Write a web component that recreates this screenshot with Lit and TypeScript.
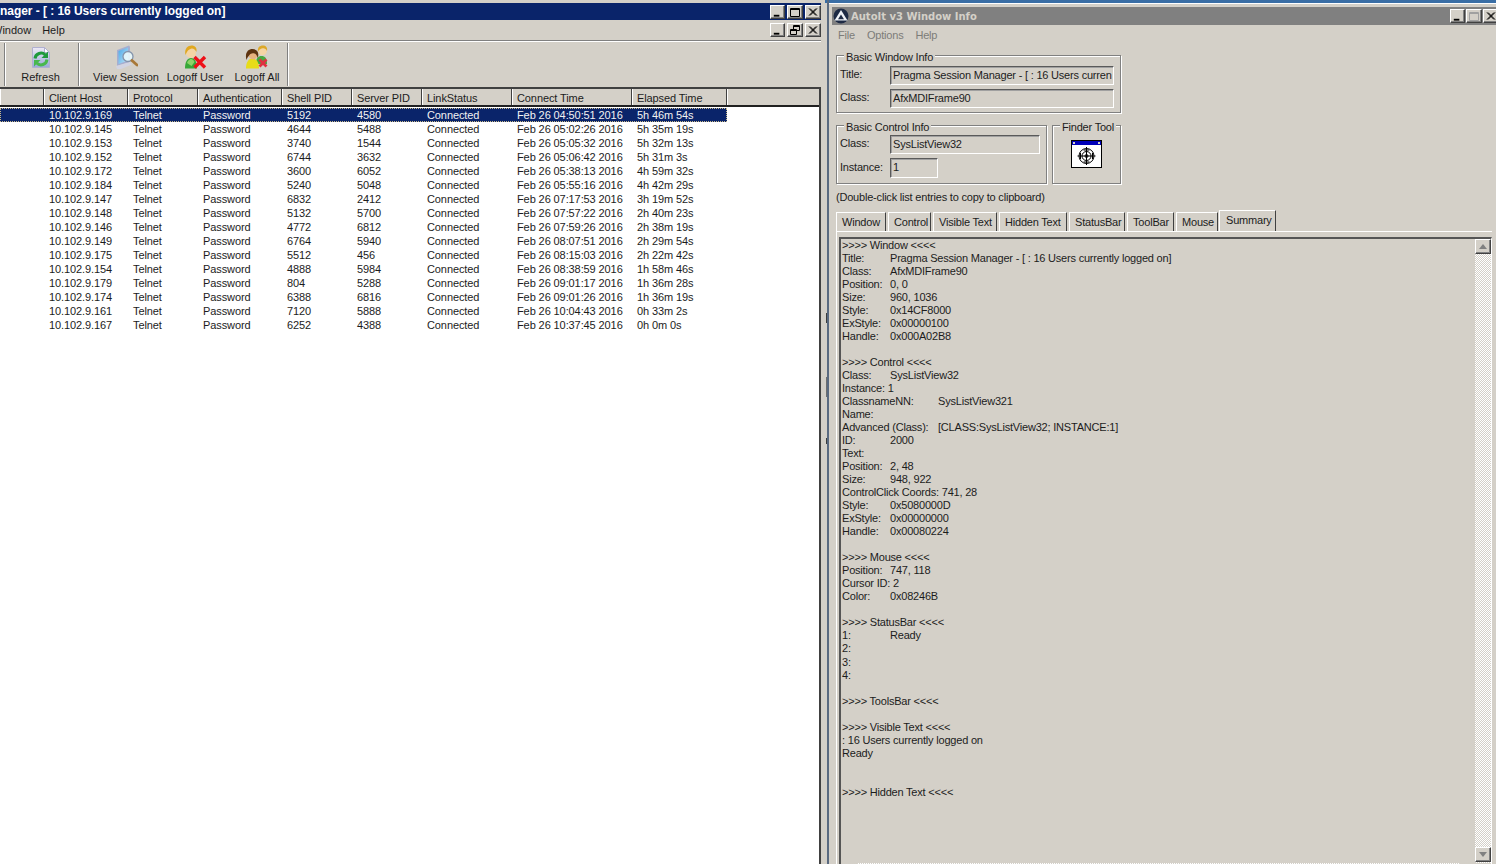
import { LitElement, html, css, svg } from "lit";
import { customElement } from "lit/decorators.js";

const COLS = [44, 84, 70, 84, 70, 70, 90, 120, 95];
const HEAD = ["", "Client Host", "Protocol", "Authentication", "Shell PID", "Server PID", "LinkStatus", "Connect Time", "Elapsed Time"];
const ROWS = [
  ["10.102.9.169", "5192", "4580", "Feb 26 04:50:51 2016", "5h 46m 54s"],
  ["10.102.9.145", "4644", "5488", "Feb 26 05:02:26 2016", "5h 35m 19s"],
  ["10.102.9.153", "3740", "1544", "Feb 26 05:05:32 2016", "5h 32m 13s"],
  ["10.102.9.152", "6744", "3632", "Feb 26 05:06:42 2016", "5h 31m 3s"],
  ["10.102.9.172", "3600", "6052", "Feb 26 05:38:13 2016", "4h 59m 32s"],
  ["10.102.9.184", "5240", "5048", "Feb 26 05:55:16 2016", "4h 42m 29s"],
  ["10.102.9.147", "6832", "2412", "Feb 26 07:17:53 2016", "3h 19m 52s"],
  ["10.102.9.148", "5132", "5700", "Feb 26 07:57:22 2016", "2h 40m 23s"],
  ["10.102.9.146", "4772", "6812", "Feb 26 07:59:26 2016", "2h 38m 19s"],
  ["10.102.9.149", "6764", "5940", "Feb 26 08:07:51 2016", "2h 29m 54s"],
  ["10.102.9.175", "5512", "456", "Feb 26 08:15:03 2016", "2h 22m 42s"],
  ["10.102.9.154", "4888", "5984", "Feb 26 08:38:59 2016", "1h 58m 46s"],
  ["10.102.9.179", "804", "5288", "Feb 26 09:01:17 2016", "1h 36m 28s"],
  ["10.102.9.174", "6388", "6816", "Feb 26 09:01:26 2016", "1h 36m 19s"],
  ["10.102.9.161", "7120", "5888", "Feb 26 10:04:43 2016", "0h 33m 2s"],
  ["10.102.9.167", "6252", "4388", "Feb 26 10:37:45 2016", "0h 0m 0s"],
];
const TABS: [string, number][] = [
  ["Window", 50], ["Control", 43], ["Visible Text", 64], ["Hidden Text", 68],
  ["StatusBar", 56], ["ToolBar", 47], ["Mouse", 42],
];

// [label, value, tab width]
const SUMMARY: ([string] | [string, string] | [string, string, number])[] = [
  [">>>> Window <<<<"],
  ["Title:", "Pragma Session Manager - [ : 16 Users currently logged on]"],
  ["Class:", "AfxMDIFrame90"],
  ["Position:", "0, 0"],
  ["Size:", "960, 1036"],
  ["Style:", "0x14CF8000"],
  ["ExStyle:", "0x00000100"],
  ["Handle:", "0x000A02B8"],
  [""],
  [">>>> Control <<<<"],
  ["Class:", "SysListView32"],
  ["Instance: 1"],
  ["ClassnameNN:", "SysListView321", 96],
  ["Name:"],
  ["Advanced (Class):", "[CLASS:SysListView32; INSTANCE:1]", 96],
  ["ID:", "2000"],
  ["Text:"],
  ["Position:", "2, 48"],
  ["Size:", "948, 922"],
  ["ControlClick Coords: 741, 28"],
  ["Style:", "0x5080000D"],
  ["ExStyle:", "0x00000000"],
  ["Handle:", "0x00080224"],
  [""],
  [">>>> Mouse <<<<"],
  ["Position:", "747, 118"],
  ["Cursor ID: 2"],
  ["Color:", "0x08246B"],
  [""],
  [">>>> StatusBar <<<<"],
  ["1:", "Ready"],
  ["2:"],
  ["3:"],
  ["4:"],
  [""],
  [">>>> ToolsBar <<<<"],
  [""],
  [">>>> Visible Text <<<<"],
  [": 16 Users currently logged on"],
  ["Ready"],
  [""],
  [""],
  [">>>> Hidden Text <<<<"],
];

const refreshIcon = svg`<svg width="24" height="24" viewBox="0 0 24 24">
  <defs><linearGradient id="rp" x1="0" y1="0" x2="0" y2="1"><stop offset="0" stop-color="#eeeaf6"/><stop offset="1" stop-color="#98a8d8"/></linearGradient></defs>
  <path d="M3.500 2.500h12l5 5v15h-17z" fill="url(#rp)" stroke="#b0b0d0"/>
  <path d="M15.500 2.500v5h5z" fill="#fff" stroke="#b0b0d0"/>
  <path d="M6 13.500a6 6 0 0 1 10.300-3.500" fill="none" stroke="#1f9a3c" stroke-width="3"/>
  <path d="M19 6.500v6.500h-6.500z" fill="#1f9a3c"/>
  <path d="M18 14.500a6 6 0 0 1-10.300 3.500" fill="none" stroke="#48b84e" stroke-width="3"/>
  <path d="M5 21.500v-6.500h6.500z" fill="#48b84e"/>
</svg>`;
const viewIcon = svg`<svg width="24" height="24" viewBox="0 0 24 24">
  <defs><linearGradient id="vm" x1="0" y1="0" x2="1" y2="1"><stop offset="0" stop-color="#4aa8e8"/><stop offset="1" stop-color="#c2e6f8"/></linearGradient></defs>
  <path d="M3 5l12-4.500 1 1v15.500L3 21z" fill="#a6aed0"/>
  <path d="M4.500 6l9.500-3.600v13L4.500 19z" fill="url(#vm)"/>
  <path d="M2 21l14-4 2 2.500-11 4.500H3z" fill="#d2d4e2"/>
  <circle cx="14" cy="11.500" r="5" fill="#e8f8fc" fill-opacity=".9" stroke="#8494ac" stroke-width="1.300"/>
  <path d="M18 15.500l5 4.500" stroke="#a87838" stroke-width="2.800" stroke-linecap="round"/>
</svg>`;
const xMark = (x: number, y: number, s: number, w: number, c = "#ee1018") => svg`<path d="M${x} ${y}l${s} ${s}m0-${s}l-${s} ${s}" stroke="${c}" stroke-width="${w}" fill="none"/>`;
const userIcon = svg`<svg width="24" height="24" viewBox="0 0 24 24">
  <path d="M2 23.500c0-7 2.500-10.500 6-10.500s6 3 6 10.500z" fill="#38a838"/>
  <path d="M4 18c1-3 3-4 4-4s3 1 3.500 3l-3 4z" fill="#8ed468"/>
  <circle cx="8" cy="8" r="5" fill="#f4d4a4"/>
  <path d="M2.500 10C1 3.500 5 .5 8.500.5c3.500 0 6 2.500 4.800 6.500-1-2.500-3-3.800-5.300-3.300S4 6 2.500 10z" fill="#e0a820"/>
  ${xMark(11.500, 12, 10.500, 3.400)}
</svg>`;
const allIcon = svg`<svg width="24" height="24" viewBox="0 0 24 24">
  <path d="M11 19c0-6 2-8 5.500-8s5.500 2 5.500 8z" fill="#48a840"/>
  <circle cx="17.500" cy="6" r="4.300" fill="#f4d4a4"/>
  <path d="M13 6.500c-.8-4 1.800-6 4.800-6 3 0 5 2 4.200 5.500-1-2-2.500-3-4.300-2.700-1.500.3-3.400 1-4.700 3.200z" fill="#dca828"/>
  <path d="M1 23.500c0-7 3-10 6.500-10s6.500 3 6.500 10z" fill="#e8dc18"/>
  <circle cx="8" cy="10" r="4.400" fill="#e8b27e"/>
  <path d="M1.500 15C-.5 8 3 4 7.500 4s7 3.500 5.300 9c-1-3-2.500-4.800-5-4.800S3 11 1.500 15z" fill="#5e3410"/>
  ${xMark(14.500, 14.500, 7, 2.800, "#e03040")}
</svg>`;
const appIcon = svg`<svg width="16" height="16" viewBox="0 0 16 16">
  <circle cx="8" cy="8" r="7.500" fill="#1d2a44"/>
  <path d="M8 2L14.500 12.500H1.500z" fill="#eef1f6"/>
  <path d="M8 6.500L11 11.300H5z" fill="#1d2a44"/>
</svg>`;
const finderIcon = svg`<svg width="31" height="28" viewBox="0 0 31 28">
  <rect x=".5" y=".5" width="30" height="27" fill="#fff" stroke="#000"/>
  <rect x="1" y="1" width="29" height="4" fill="#0000b8"/>
  <rect x="2" y="2" width="2" height="2" fill="#d4d0c8"/><rect x="27" y="2" width="2" height="2" fill="#d4d0c8"/>
  <g fill="none" stroke="#000">
    <circle cx="15.500" cy="16" r="7.500"/><circle cx="15.500" cy="16" r="4.500"/><circle cx="15.500" cy="16" r="1.500"/>
    <path d="M15.500 7v18M6.500 16h18M12.500 10h6M12.500 22h6M9.500 13v6M21.500 13v6"/>
  </g>
</svg>`;

@customElement("app-root")
export class AppRoot extends LitElement {
  static styles = css`
    :host { display: flex; width: 1496px; height: 864px; overflow: hidden; background: #d4d0c8;
      font: 11px/13px "Liberation Sans", Arial, sans-serif; color: #1c1c1c; }
    .left { width: 821px; flex: none; display: flex; flex-direction: column; padding-top: 3px; box-sizing: border-box; overflow: hidden; }
    .title { height: 17px; flex: none; background: #0a246a; color: #fff; display: flex; align-items: center; justify-content: space-between; font-weight: bold; font-size: 12px; letter-spacing: -0.05px; white-space: nowrap; }
    .wbtns { display: flex; gap: 2px; align-items: center; }
    .wbtn { width: 16px; height: 14px; box-sizing: border-box; background: #d4d0c8; border: 1px solid; border-color: #fff #404040 #404040 #fff; box-shadow: inset -1px -1px 0 #808080; display: flex; align-items: center; justify-content: center; }
    .wbtn:first-child { width: 15px; }
    .wbtn svg { display: block; }
    .menu { height: 20px; flex: none; display: flex; align-items: center; justify-content: space-between; border-bottom: 1px solid #808080; box-shadow: 0 1px 0 #fff; }
    .menu-items { display: flex; gap: 11px; }
    .clip { margin-left: -8px; }
    .toolbar { height: 45px; flex: none; margin-top: 1px; display: flex; align-items: stretch; }
    .sp4 { width: 4px; flex: none; }
    .sp3 { width: 3px; flex: none; }
    .sp12 { width: 12px; flex: none; }
    .sep { width: 2px; flex: none; margin: 1px 0; background: linear-gradient(to right, #808080 1px, #fff 1px); }
    .tool { flex: none; display: flex; flex-direction: column; align-items: center; padding-top: 3px; box-sizing: border-box; }
    .tool svg { display: block; height: 24px; }
    .tool span { margin-top: 2px; white-space: nowrap; }
    .list { flex: 1; display: flex; flex-direction: column; background: #fff; border-top: 2px solid #404040; min-height: 0; border-right: 2px solid #404040; letter-spacing: -0.1px; }
    .head { display: flex; height: 16px; flex: none; background: #d4d0c8; border-bottom: 2px solid #202020; }
    .hcell { box-sizing: border-box; padding: 3px 0 0 4px; border-left: 1px solid #fff; border-right: 1px solid #404040; white-space: nowrap; overflow: hidden; }
    .hfill { flex: 1; border-left: 1px solid #fff; }
    .rows { margin-top: 1px; display: flex; flex-direction: column; }
    .row { display: flex; height: 14px; width: 727px; line-height: 14px; box-sizing: border-box; }
    .row.sel { background: #0a246a; color: #f2f2f2; outline: 1px dotted #c8b98a; outline-offset: -1px; }
    .cell { box-sizing: border-box; padding-left: 5px; white-space: nowrap; overflow: hidden; }
    .gutter { width: 8px; flex: none; box-sizing: border-box; border-right: 2px solid #5a6a80; background:
      linear-gradient(#3a6ea5, #3a6ea5) 4px 0 / 4px 3px no-repeat,
      linear-gradient(#3c3c3c, #3c3c3c) 5px 313px / 1px 10px no-repeat,
      linear-gradient(#6e6e6e, #6e6e6e) 5px 377px / 1px 20px no-repeat,
      linear-gradient(#3c3c3c, #3c3c3c) 5px 438px / 1px 6px no-repeat, #d4d0c8; }
    .right { flex: 1; min-width: 0; display: flex; flex-direction: column; overflow: hidden; letter-spacing: -0.2px; }
    .desk { height: 3px; flex: none; background: #3a6ea5; }
    .rtop { height: 4px; flex: none; border-top: 1px solid #fff; box-sizing: border-box; }
    .rtitle { height: 18px; flex: none; margin-left: 3px; background: #808080; color: #d4d0c8; display: flex; align-items: center; justify-content: space-between; font: bold 10px "DejaVu Sans", Verdana, sans-serif; letter-spacing: 0; white-space: nowrap; }
    .rname { display: flex; align-items: center; gap: 2px; padding-left: 1px; }
    .rbtns { display: flex; gap: 1px; margin-right: -3px; }
    .rmenu { height: 19px; flex: none; display: flex; align-items: center; gap: 12px; padding: 2px 0 0 9px; box-sizing: border-box; color: #7c7c78; }
    .rbody { flex: 1; min-height: 0; display: flex; flex-direction: column; padding-left: 7px; }
    .grp { position: relative; box-sizing: border-box; border: 1px solid #808080; box-shadow: inset 1px 1px 0 #fff, 1px 1px 0 #fff; }
    .grp > b { position: absolute; left: 7px; top: -5px; padding: 0 2px; background: #d4d0c8; font-weight: normal; white-space: nowrap; }
    .g1 { width: 285px; height: 58px; margin-top: 11px; padding: 10px 6px 0 3px; display: flex; flex-direction: column; gap: 4px; }
    .fline { display: flex; align-items: center; }
    .fline label { width: 50px; flex: none; margin-top: -2px; }
    .field { box-sizing: border-box; height: 19px; line-height: 17px; padding-left: 2px; border: 1px solid; border-color: #5a5a5a #fff #fff #5a5a5a; box-shadow: inset 1px 1px 0 #a0a0a0; white-space: nowrap; overflow: hidden; }
    .g1 .field { width: 224px; }
    .grow { display: flex; gap: 5px; margin-top: 12px; }
    .g2 { width: 211px; height: 59px; padding: 9px 0 0 3px; display: flex; flex-direction: column; gap: 4px; }
    .g2 .w150 { width: 150px; }
    .g2 .w48 { width: 48px; height: 20px; }
    .g3 { width: 69px; height: 59px; padding-top: 14px; display: flex; justify-content: center; }
    .g3 svg { display: block; }
    .hint { height: 13px; flex: none; margin-top: 7px; }
    .tabs { display: flex; align-items: flex-end; height: 21px; flex: none; margin-top: 6px; gap: 2px; }
    .tab { height: 19px; box-sizing: border-box; line-height: 18px; padding-left: 5px; white-space: nowrap; border: 1px solid; border-color: #fff #404040 transparent #fff; border-bottom: 0; }
    .tab.on { height: 21px; padding-left: 6px; margin-left: -1px; line-height: 19px; width: 57px; }
    .panel { flex: 1; min-height: 0; display: flex; flex-direction: column; width: 656px; box-sizing: border-box; border-top: 1px solid #fff; border-left: 1px solid #fff; padding: 5px 0 0 2px; }
    .edit { flex: 1; min-height: 0; display: flex; flex-direction: column; border-top: 2px solid #555; border-left: 2px solid #555; border-right: 1px solid #fff; box-sizing: border-box; }
    .emain { flex: 1; min-height: 0; display: flex; overflow: hidden; }
    .etext { flex: 1; min-width: 0; padding: 0 0 0 1px; overflow: hidden; }
    .ln { height: 13.02px; line-height: 13px; white-space: nowrap; display: flex; }
    .ln i { font-style: normal; flex: none; }
    .vs { width: 16px; flex: none; display: flex; flex-direction: column; justify-content: space-between; background: repeating-conic-gradient(#d4d0c8 0 25%, #fff 0 50%) 0 0 / 2px 2px; }
    .sb { height: 15px; width: 16px; box-sizing: border-box; background: #d4d0c8; border: 1px solid; border-color: #fff #404040 #404040 #fff; box-shadow: inset -1px -1px 0 #808080; display: flex; align-items: center; justify-content: center; }
    .vs .sb:last-child { margin-bottom: 1px; }
    .hs { height: 1px; flex: none; margin: 0 31px 0 17px; background: repeating-conic-gradient(#d4d0c8 0 25%, #fff 0 50%) 0 0 / 2px 2px; }
  `;

  private winBtn(kind: string, off = false) {
    const c = off ? "#a0a0a0" : "#000";
    const g =
      kind === "min" ? svg`<path d="M3 9h6v2H3z" fill="${c}"/>`
      : kind === "max" ? svg`<path d="M2.500 2.500h9v8h-9zM2 3.500h10" fill="none" stroke="${c}"/>`
      : kind === "res" ? svg`<path d="M5.500 1.500h6v5h-6zM2.500 5.500h6v5h-6zM5 2.500h6M2 6.500h6" fill="none" stroke="${c}"/>`
      : svg`<path d="M3 2.500l7 7M4 2.500l7 7M10 2.500l-7 7M11 2.500l-7 7" stroke="${c}"/>`;
    return html`<div class="wbtn"><svg width="14" height="12" viewBox="0 0 14 12">${g}</svg></div>`;
  }

  render() {
    const vals = (r: string[]) => [" ", r[0], "Telnet", "Password", r[1], r[2], "Connected", r[3], r[4]];
    return html`
      <div class="left">
        <div class="title"><span>nager - [ : 16 Users currently logged on]</span>
          <div class="wbtns">${this.winBtn("min")}${this.winBtn("max")}${this.winBtn("close")}</div></div>
        <div class="menu"><div class="menu-items"><span class="clip">Window</span><span>Help</span></div>
          <div class="wbtns">${this.winBtn("min")}${this.winBtn("res")}${this.winBtn("close")}</div></div>
        <div class="toolbar">
          <div class="sp4"></div>
          <div class="sep"></div>
          <div class="tool" style="width:69px">${refreshIcon}<span>Refresh</span></div>
          <div class="sp3"></div>
          <div class="sep"></div>
          <div class="sp12"></div>
          <div class="tool" style="width:68px">${viewIcon}<span>View Session</span></div>
          <div class="sp3"></div>
          <div class="tool" style="width:64px">${userIcon}<span>Logoff User</span></div>
          <div class="sp3"></div>
          <div class="tool" style="width:54px">${allIcon}<span>Logoff All</span></div>
          <div class="sp3"></div>
          <div class="sep"></div>
        </div>
        <div class="list">
          <div class="head">
            ${HEAD.map((h, i) => html`<div class="hcell" style="width:${COLS[i]}px">${h}</div>`)}
            <div class="hfill"></div>
          </div>
          <div class="rows">
            ${ROWS.map((r, n) => html`<div class="row ${n === 0 ? "sel" : ""}">
              ${vals(r).map((v, i) => html`<div class="cell" style="width:${COLS[i]}px">${v}</div>`)}</div>`)}
          </div>
        </div>
      </div>
      <div class="gutter"></div>
      <div class="right">
        <div class="desk"></div>
        <div class="rtop"></div>
        <div class="rtitle">
          <div class="rname">${appIcon}<span>AutoIt v3 Window Info</span></div>
          <div class="rbtns">${this.winBtn("min")}${this.winBtn("max", true)}${this.winBtn("close")}</div>
        </div>
        <div class="rmenu"><span>File</span><span>Options</span><span>Help</span></div>
        <div class="rbody">
          <div class="grp g1"><b>Basic Window Info</b>
            <div class="fline"><label>Title:</label><div class="field">Pragma Session Manager - [ : 16 Users curren</div></div>
            <div class="fline"><label>Class:</label><div class="field">AfxMDIFrame90</div></div>
          </div>
          <div class="grow">
            <div class="grp g2"><b>Basic Control Info</b>
              <div class="fline"><label>Class:</label><div class="field w150">SysListView32</div></div>
              <div class="fline"><label>Instance:</label><div class="field w48">1</div></div>
            </div>
            <div class="grp g3"><b>Finder Tool</b>${finderIcon}</div>
          </div>
          <div class="hint">(Double-click list entries to copy to clipboard)</div>
          <div class="tabs">
            ${TABS.map(([t, w]) => html`<div class="tab" style="width:${w}px">${t}</div>`)}
            <div class="tab on">Summary</div>
          </div>
          <div class="panel">
            <div class="edit">
              <div class="emain">
                <div class="etext">
                  ${SUMMARY.map((l) => html`<div class="ln">
                    ${l.length > 1 ? html`<i style="width:${l[2] ?? 48}px">${l[0]}</i><span>${l[1]}</span>` : html`<span>${l[0]}</span>`}
                  </div>`)}
                </div>
                <div class="vs">
                  <div class="sb"><svg width="8" height="5" viewBox="0 0 8 5"><path d="M4 0l4 5H0z" fill="#808080"/></svg></div>
                  <div class="sb"><svg width="8" height="5" viewBox="0 0 8 5"><path d="M0 0h8L4 5z" fill="#808080"/></svg></div>
                </div>
              </div>
              <div class="hs"></div>
            </div>
          </div>
        </div>
      </div>
    `;
  }
}
